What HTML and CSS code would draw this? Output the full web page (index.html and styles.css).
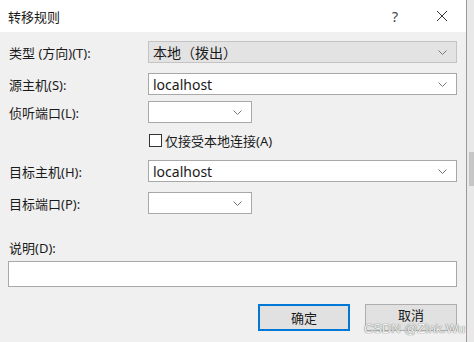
FILE: index.html
```html
<!DOCTYPE html>
<html lang="zh-CN">
  <head>
    <meta charset="UTF-8" />
    <title>转移规则</title>
    <link rel="stylesheet" href="styles.css">
  </head>
  <body>
    <div class="dialog">
      <div class="titlebar">
        <span class="title">转移规则</span>
        <span class="help">?</span>
        <svg class="close" width="12" height="12" viewBox="0 0 12 12">
          <path d="M1 1 L11 11 M11 1 L1 11" stroke="#333" stroke-width="1" fill="none"/>
        </svg>
      </div>

      <div class="form">
        <div class="row">
          <label>类型 (方向)(T):</label>
          <div class="combo wide disabled">
            <span>本地（拨出）</span>
            <svg class="arrow" width="9" height="5" viewBox="0 0 9 5"><path d="M0.5 0.5 L4.5 4.5 L8.5 0.5" stroke="#777" fill="none"/></svg>
          </div>
        </div>

        <div class="row gap10">
          <label>源主机(S):</label>
          <div class="combo wide">
            <span>localhost</span>
            <svg class="arrow" width="9" height="5" viewBox="0 0 9 5"><path d="M0.5 0.5 L4.5 4.5 L8.5 0.5" stroke="#777" fill="none"/></svg>
          </div>
        </div>

        <div class="row gap6">
          <label>侦听端口(L):</label>
          <div class="combo short">
            <span></span>
            <svg class="arrow" width="9" height="5" viewBox="0 0 9 5"><path d="M0.5 0.5 L4.5 4.5 L8.5 0.5" stroke="#777" fill="none"/></svg>
          </div>
        </div>

        <div class="check-row">
          <span class="checkbox"></span>
          <span>仅接受本地连接(A)</span>
        </div>

        <div class="row gap12">
          <label>目标主机(H):</label>
          <div class="combo wide">
            <span>localhost</span>
            <svg class="arrow" width="9" height="5" viewBox="0 0 9 5"><path d="M0.5 0.5 L4.5 4.5 L8.5 0.5" stroke="#777" fill="none"/></svg>
          </div>
        </div>

        <div class="row gap10">
          <label>目标端口(P):</label>
          <div class="combo short">
            <span></span>
            <svg class="arrow" width="9" height="5" viewBox="0 0 9 5"><path d="M0.5 0.5 L4.5 4.5 L8.5 0.5" stroke="#777" fill="none"/></svg>
          </div>
        </div>

        <div class="desc-label">说明(D):</div>
        <div class="textbox"></div>

        <div class="buttons">
          <button class="btn primary">确定</button>
          <button class="btn cancel">取消</button>
        </div>
      </div>

      <span class="watermark">CSDN @Zink.Wu</span>
    </div>
    <div class="side-patch"></div>
  </body>
</html>
```

FILE: styles.css
```css
* {
  box-sizing: border-box;
}

body {
  margin: 0;
  width: 474px;
  height: 342px;
  overflow: hidden;
  background-color: #e9e9e9;
  font-family: "Noto Sans", "Noto Sans CJK SC", sans-serif;
  font-size: 13px;
  color: #1a1a1a;
  position: relative;
}

.dialog {
  position: relative;
  width: 467px;
  height: 342px;
  background-color: #f0f0f0;
  border-right: 1px solid #9a9a9a;
}

.titlebar {
  height: 32px;
  background-color: #ffffff;
  display: flex;
  align-items: center;
  padding-left: 8px;
}

.title {
  flex: 1;
  font-size: 13px;
}

.help {
  font-size: 14px;
  color: #444;
  margin-right: 38px;
}

.close {
  margin-right: 18px;
}

.form {
  padding: 9px 9px 0 9px;
}

.row {
  display: flex;
  align-items: center;
  height: 22px;
}

.row label {
  width: 139px;
  font-size: 13px;
}

.gap10 { margin-top: 10px; }
.gap6 { margin-top: 6px; }
.gap12 { margin-top: 12px; }

.combo {
  height: 22px;
  display: flex;
  align-items: center;
  justify-content: space-between;
  background-color: #ffffff;
  border: 1px solid #a8a8a8;
  padding: 0 9px 0 4px;
  font-size: 14px;
}

.combo.wide {
  flex: 1;
}

.combo.short {
  width: 104px;
}

.combo.disabled {
  background-color: #e3e3e3;
  border-color: #c4c4c4;
}

.check-row {
  display: flex;
  align-items: center;
  gap: 3px;
  margin-top: 10px;
  padding-left: 140px;
  height: 15px;
  font-size: 13px;
}

.checkbox {
  width: 13px;
  height: 13px;
  background-color: #ffffff;
  border: 1px solid #333;
}

.desc-label {
  margin-top: 24px;
  font-size: 13px;
  height: 17px;
}

.textbox {
  margin-top: 6px;
  height: 26px;
  background-color: #ffffff;
  border: 1px solid #a8a8a8;
  margin-left: -1px;
}

.buttons {
  display: flex;
  justify-content: flex-end;
  gap: 15px;
  margin-top: 17px;
}

.btn {
  width: 92px;
  height: 27px;
  background-color: #e1e1e1;
  border: 1px solid #adadad;
  font-family: "Noto Sans CJK SC", sans-serif;
  font-size: 13px;
  color: #1a1a1a;
  padding: 0;
}

.btn.primary {
  border: 2px solid #0078d7;
}

.btn.cancel {
  padding-bottom: 6px;
}

.watermark {
  position: absolute;
  right: 1px;
  top: 321px;
  font-family: "Liberation Sans", sans-serif;
  font-size: 13px;
  line-height: 15px;
  color: #f4f4f4;
  text-shadow: 0 0 1px #777, 0 0 1px #777;
}

.side-patch {
  position: absolute;
  left: 469px;
  top: 152px;
  width: 5px;
  height: 34px;
  background-color: #c6c6c6;
}
```
